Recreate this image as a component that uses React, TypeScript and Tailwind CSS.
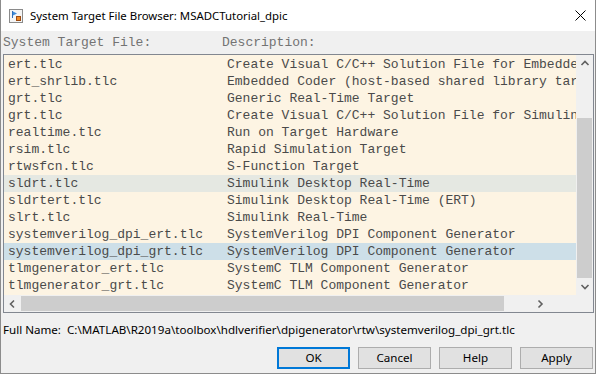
import React from "react";

const rows: [string, string, string?][] = [
  ["ert.tlc", "Create Visual C/C++ Solution File for Embedded Coder"],
  ["ert_shrlib.tlc", "Embedded Coder (host-based shared library target)"],
  ["grt.tlc", "Generic Real-Time Target"],
  ["grt.tlc", "Create Visual C/C++ Solution File for Simulink Coder"],
  ["realtime.tlc", "Run on Target Hardware"],
  ["rsim.tlc", "Rapid Simulation Target"],
  ["rtwsfcn.tlc", "S-Function Target"],
  ["sldrt.tlc", "Simulink Desktop Real-Time", "hover"],
  ["sldrtert.tlc", "Simulink Desktop Real-Time (ERT)"],
  ["slrt.tlc", "Simulink Real-Time"],
  ["systemverilog_dpi_ert.tlc", "SystemVerilog DPI Component Generator"],
  ["systemverilog_dpi_grt.tlc", "SystemVerilog DPI Component Generator", "selected"],
  ["tlmgenerator_ert.tlc", "SystemC TLM Component Generator"],
  ["tlmgenerator_grt.tlc", "SystemC TLM Component Generator"],
];

const ui = { fontFamily: '"Segoe UI", "Noto Sans", "Liberation Sans", sans-serif' };
const mono = { fontFamily: '"Courier New", "Liberation Mono", monospace' };

const AppIcon = () => (
  <svg width="14" height="14" viewBox="0 0 14 14">
    <rect x="0.5" y="0.5" width="13" height="13" fill="#f4f4f4" stroke="#8a8a8a" />
    <line x1="3.5" y1="2" x2="3.5" y2="9" stroke="#2f6fb8" />
    <path d="M4 2.5 L8 4.5 L4 6.5 Z" fill="#3d8ad8" />
    <rect x="7.5" y="7.5" width="4" height="4" fill="#f08a24" stroke="#9c4a10" />
  </svg>
);

const Chevron = ({ dir }: { dir: "up" | "down" | "left" | "right" }) => {
  const d = {
    up: "M1.5 6 L5 2.5 L8.5 6",
    down: "M1.5 3 L5 6.5 L8.5 3",
    left: "M6 1.5 L2.5 5 L6 8.5",
    right: "M3.5 1.5 L7 5 L3.5 8.5",
  }[dir];
  return (
    <svg width="10" height="10" viewBox="0 0 10 10">
      <path d={d} fill="none" stroke="#606060" strokeWidth="1.6" />
    </svg>
  );
};

const Button = ({ label, primary }: { label: string; primary?: boolean }) => (
  <button
    className={
      primary
        ? "w-[73px] h-[22px] bg-[#e1e1e1] border-2 border-[#0078d7] text-[11.6px] text-black flex items-center justify-center"
        : "w-[73px] h-[22px] bg-[#e1e1e1] border border-[#adadad] text-[11.6px] text-black flex items-center justify-center"
    }
    style={ui}
  >
    {label}
  </button>
);

export default function App() {
  return (
    <div className="w-[596px] h-[374px] bg-[#f0f0f0] border-l border-r border-b border-[#8c8c8c] flex flex-col overflow-hidden">
      {/* Title bar */}
      <div className="h-[31px] bg-white flex items-center pl-[8px] shrink-0">
        <AppIcon />
        <span className="ml-[7px] text-[11.4px] text-black" style={ui}>
          System Target File Browser: MSADCTutorial_dpic
        </span>
        <svg className="ml-auto mr-[9px]" width="11" height="11" viewBox="0 0 11 11">
          <path d="M0.5 0.5 L10.5 10.5 M10.5 0.5 L0.5 10.5" stroke="#000" strokeWidth="1" />
        </svg>
      </div>

      {/* Column headers */}
      <div className="h-[23px] flex items-center pl-[2px] text-[13px] text-[#737373] shrink-0" style={mono}>
        <span className="w-[219px]">System Target File:</span>
        <span>Description:</span>
      </div>

      {/* List */}
      <div className="ml-[2px] w-[591px] h-[259px] border border-[#828790] flex flex-col shrink-0">
        <div className="flex h-[240px]">
          <div className="flex-1 pt-[1px] bg-[#fdf4e3] overflow-hidden">
            {rows.map(([file, desc, state], i) => (
              <div
                key={i}
                className={
                  state === "selected"
                    ? "h-[17px] flex items-center pl-[4px] whitespace-nowrap text-[13px] text-[#4a4a4a] bg-[#cddfe8]"
                    : state === "hover"
                    ? "h-[17px] flex items-center pl-[4px] whitespace-nowrap text-[13px] text-[#4a4a4a] bg-[#e5e8e2]"
                    : "h-[17px] flex items-center pl-[4px] whitespace-nowrap text-[13px] text-[#4a4a4a]"
                }
                style={mono}
              >
                <span className="w-[219px] shrink-0">{file}</span>
                <span>{desc}</span>
              </div>
            ))}
          </div>
          <div className="w-[17px] bg-[#f0f0f0] flex flex-col">
            <div className="h-[17px] flex items-center justify-center">
              <Chevron dir="up" />
            </div>
            <div className="h-[46px]" />
            <div className="mx-[1px] flex-1 bg-[#cdcdcd]" />
            <div className="h-[17px] flex items-center justify-center">
              <Chevron dir="down" />
            </div>
          </div>
        </div>
        <div className="flex flex-1">
          <div className="flex-1 bg-[#f0f0f0] flex items-center">
            <div className="w-[17px] h-full flex items-center justify-center">
              <Chevron dir="left" />
            </div>
            <div className="w-[483px] h-[15px] bg-[#cdcdcd]" />
            <div className="flex-1 h-full flex items-center justify-center">
              <Chevron dir="right" />
            </div>
          </div>
          <div className="w-[17px] bg-[#f0f0f0]" />
        </div>
      </div>

      {/* Full name */}
      <div className="h-[34px] flex items-center pl-[2px] text-[11.6px] text-black whitespace-nowrap" style={ui}>
        Full Name:&nbsp;&nbsp;C:\MATLAB\R2019a\toolbox\hdlverifier\dpigenerator\rtw\systemverilog_dpi_grt.tlc
      </div>

      {/* Buttons */}
      <div className="flex justify-end gap-[8px] pr-[2px]">
        <Button label="OK" primary />
        <Button label="Cancel" />
        <Button label="Help" />
        <Button label="Apply" />
      </div>
    </div>
  );
}
